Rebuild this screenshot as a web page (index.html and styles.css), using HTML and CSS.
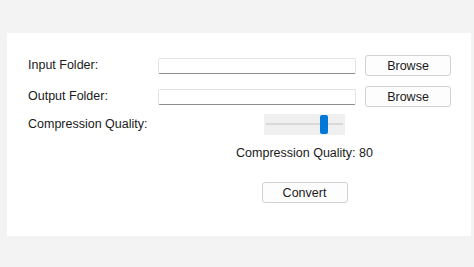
FILE: index.html
```html
<!DOCTYPE html>
<html>
<head>
<meta charset="utf-8">
<link rel="stylesheet" href="styles.css">
</head>
<body>
<div class="page">
  <div class="panel">
    <div class="row row-1">
      <span class="label">Input Folder:</span>
      <div class="field"></div>
      <button class="btn">Browse</button>
    </div>
    <div class="row row-2">
      <span class="label">Output Folder:</span>
      <div class="field"></div>
      <button class="btn">Browse</button>
    </div>
    <div class="row row-3">
      <span class="label">Compression Quality:</span>
      <div class="span">
        <div class="slider">
          <div class="track"></div>
          <div class="thumb"></div>
        </div>
      </div>
    </div>
    <div class="row row-4">
      <span></span>
      <div class="span"><span class="value">Compression Quality: 80</span></div>
    </div>
    <div class="row row-5">
      <span></span>
      <div class="span"><button class="btn">Convert</button></div>
    </div>
  </div>
</div>
</body>
</html>
```

FILE: styles.css
```css
html, body {
  margin: 0;
  padding: 0;
  background: #f3f3f3;
  font-family: "Liberation Sans", Arial, sans-serif;
  font-size: 12.5px;
  color: #1a1a1a;
}
.page {
  width: 474px;
  height: 267px;
  padding: 33px 3px 0 7px;
  box-sizing: border-box;
}
.panel {
  background: #ffffff;
  height: 203px;
  padding: 22px 0 0 21px;
  box-sizing: border-box;
  display: flex;
  flex-direction: column;
}
.row {
  display: grid;
  grid-template-columns: 121px 198px 86px;
  column-gap: 9px;
  align-items: center;
}
.row-2 { margin-top: 10px; }
.row-3 { margin-top: 7px; }
.row-4 { margin-top: 10px; }
.row-5 { margin-top: 21px; }
.label {
  white-space: nowrap;
  line-height: 15px;
}
.field {
  height: 16px;
  box-sizing: border-box;
  border: 1px solid #e3e3e3;
  border-bottom: 1px solid #8c8c8c;
  border-radius: 2px;
  background: #fff;
}
.btn {
  height: 21px;
  width: 86px;
  box-sizing: border-box;
  background: #fdfdfd;
  border: 1px solid #d2d2d2;
  border-radius: 3px;
  font-family: inherit;
  font-size: 12.5px;
  color: #1a1a1a;
  padding: 0;
}
.span {
  grid-column: 2 / 4;
  display: flex;
  justify-content: center;
}
.value {
  line-height: 16px;
  white-space: nowrap;
}
.slider {
  width: 81px;
  height: 21px;
  background: #f0f0f0;
  position: relative;
}
.track {
  position: absolute;
  left: 2px;
  right: 2px;
  top: 9px;
  height: 2px;
  background: #d9d9d9;
}
.thumb {
  position: absolute;
  left: 56px;
  top: 1px;
  width: 8px;
  height: 19px;
  background: #0078d7;
  border-radius: 2px;
}
```
